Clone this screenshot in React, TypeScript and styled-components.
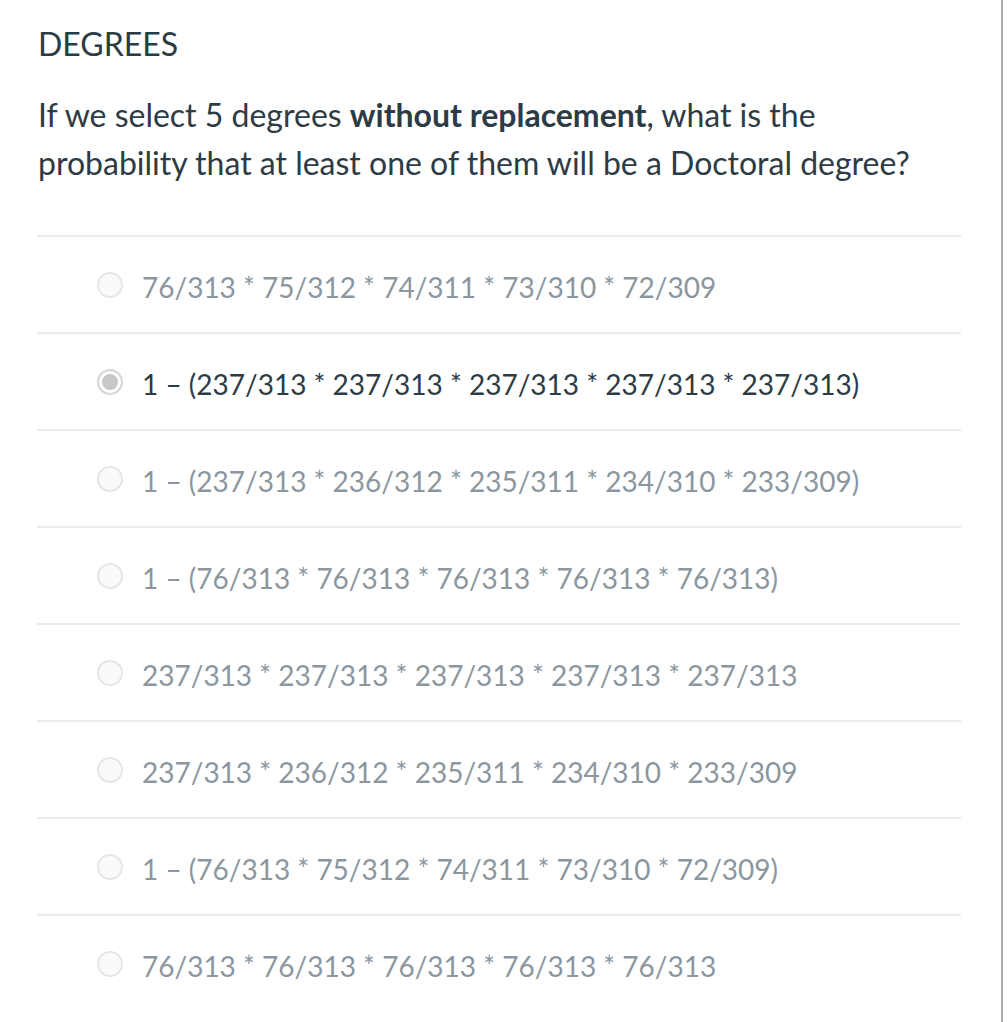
import styled, { createGlobalStyle } from 'styled-components';

const GlobalStyle = createGlobalStyle`
    body {
        margin: 0;
        background: #FFFFFF;
        font-family: Lato, "Open Sans", sans-serif;
    }
`;

const Page = styled.div`
    box-sizing: border-box;
    width: 1003px;
    min-height: 1022px;
    padding: 26px 40px 0 37px;
    border-right: 2px solid #A9A9A9;
    color: #2D3B45;
`;

const Header = styled.h2`
    margin: 0 0 0 1px;
    font-size: 32px;
    font-weight: 400;
    line-height: 36px;
`;

const Question = styled.p`
    margin: 29px 0 0 1px;
    font-size: 32px;
    line-height: 48px;
`;

const Answers = styled.div`
    margin-top: 48px;
`;

const Answer = styled.label<{ selected?: boolean }>`
    display: flex;
    align-items: center;
    height: 90px;
    padding: 5px 0 0 60px;
    border-top: 2px solid #EBEBEB;
    font-size: 28px;
    color: ${(p) => (p.selected ? '#2D3B45' : '#8B969E')};
    cursor: pointer;
`;

const Radio = styled.span<{ checked?: boolean }>`
    box-sizing: border-box;
    flex: none;
    width: 26px;
    height: 26px;
    margin: 0 19px 4px 0;
    border-radius: 50%;
    border: 2px solid ${(p) => (p.checked ? '#D8D8D8' : '#E6E6E6')};
    background: ${(p) => (p.checked ? '#C8C8C8' : '#FAFAFA')};
    box-shadow: ${(p) => (p.checked ? 'inset 0 0 0 3px #FFFFFF' : 'none')};
`;

const answers = [
    '76/313 * 75/312 * 74/311 * 73/310 * 72/309',
    '1 – (237/313 * 237/313 * 237/313 * 237/313 * 237/313)',
    '1 – (237/313 * 236/312 * 235/311 * 234/310 * 233/309)',
    '1 – (76/313 * 76/313 * 76/313 * 76/313 * 76/313)',
    '237/313 * 237/313 * 237/313 * 237/313 * 237/313',
    '237/313 * 236/312 * 235/311 * 234/310 * 233/309',
    '1 – (76/313 * 75/312 * 74/311 * 73/310 * 72/309)',
    '76/313 * 76/313 * 76/313 * 76/313 * 76/313',
];

export default function App() {
    const selected = 1;

    return (
        <Page>
            <GlobalStyle />
            <Header>DEGREES</Header>
            <Question>
                If we select 5 degrees <strong>without replacement</strong>, what is the
                probability that at least one of them will be a Doctoral degree?
            </Question>
            <Answers>
                {answers.map((text, i) => (
                    <Answer key={i} selected={i === selected}>
                        <Radio checked={i === selected} />
                        {text}
                    </Answer>
                ))}
            </Answers>
        </Page>
    );
}
